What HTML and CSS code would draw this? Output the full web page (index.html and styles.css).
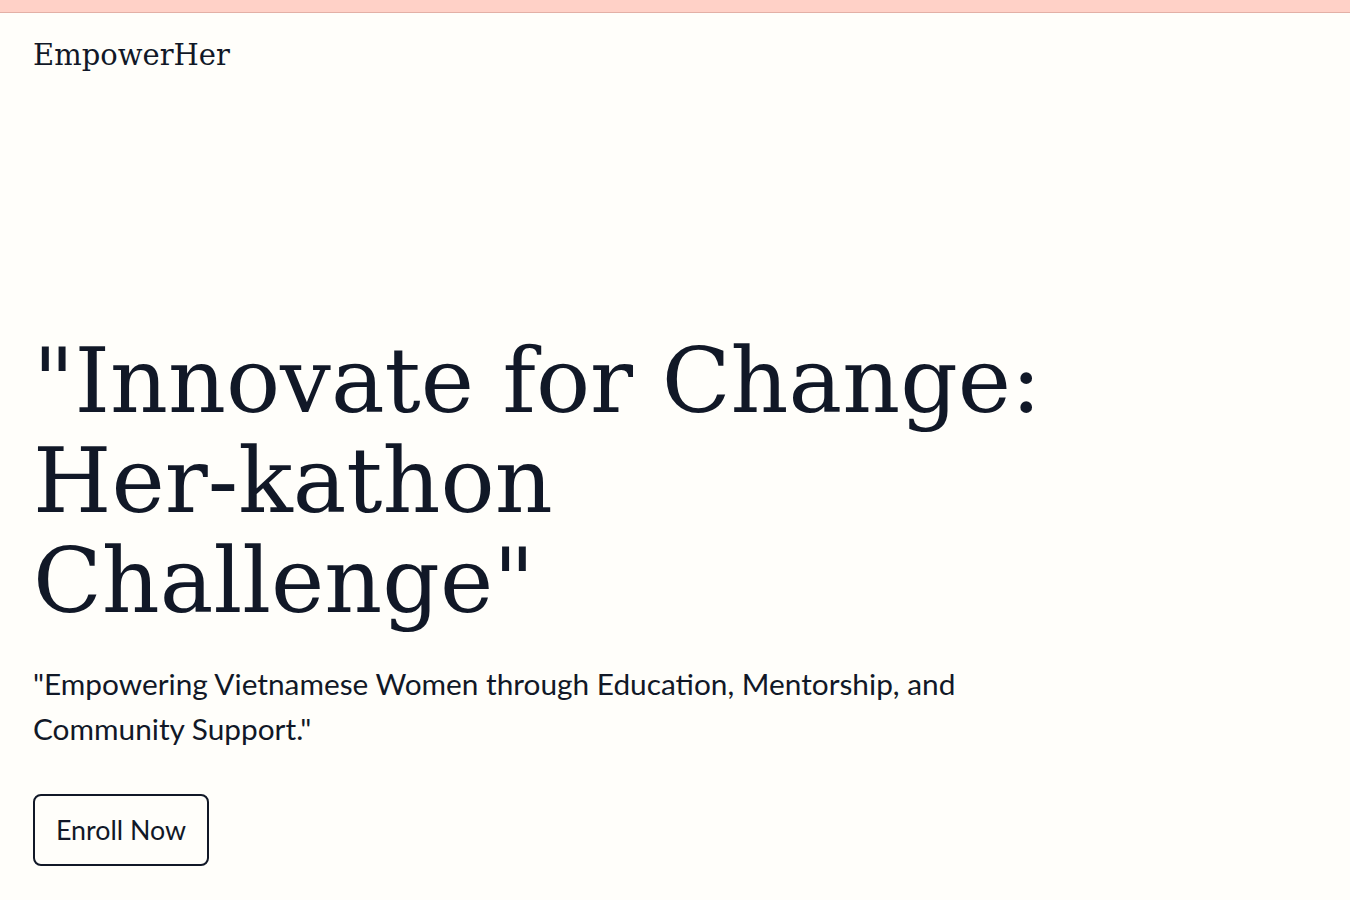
FILE: index.html
```html
<!DOCTYPE html>
<html lang="en">
<head>
<meta charset="utf-8">
<title>EmpowerHer</title>
<link rel="stylesheet" href="styles.css">
</head>
<body>
<div class="topbar"></div>
<header class="header">
  <a class="logo" href="#">EmpowerHer</a>
</header>
<main class="hero">
  <h1 class="hero-title">"Innovate for Change: Her-kathon Challenge"</h1>
  <p class="hero-sub">"Empowering Vietnamese Women through Education, Mentorship, and Community Support."</p>
  <a class="btn" href="#">Enroll Now</a>
</main>
</body>
</html>
```
FILE: styles.css
```css
html, body {
  margin: 0;
  padding: 0;
}
body {
  background: #fffefa;
  color: #111827;
  font-family: "Lato", "Noto Sans", sans-serif;
  height: 900px;
  overflow: hidden;
}
.topbar {
  height: 12px;
  background: #ffd1c7;
  border-bottom: 1px solid #e3b0a6;
}
.header {
  padding: 25px 33px 0;
}
.logo {
  font-family: "DejaVu Serif", serif;
  font-size: 29px;
  color: #111827;
  text-decoration: none;
}
.hero {
  padding: 259px 33px 0;
}
.hero-title {
  margin: 0;
  max-width: 1012px;
  font-family: "DejaVu Serif", serif;
  font-weight: 400;
  font-size: 90px;
  line-height: 100px;
  color: #111827;
}
.hero-sub {
  margin: 30px 0 0;
  max-width: 960px;
  font-size: 29.8px;
  line-height: 45px;
}
.btn {
  display: inline-block;
  margin-top: 43px;
  padding: 14px 21px;
  border: 2px solid #111827;
  border-radius: 8px;
  font-size: 26.8px;
  line-height: 40px;
  color: #111827;
  text-decoration: none;
}
```
